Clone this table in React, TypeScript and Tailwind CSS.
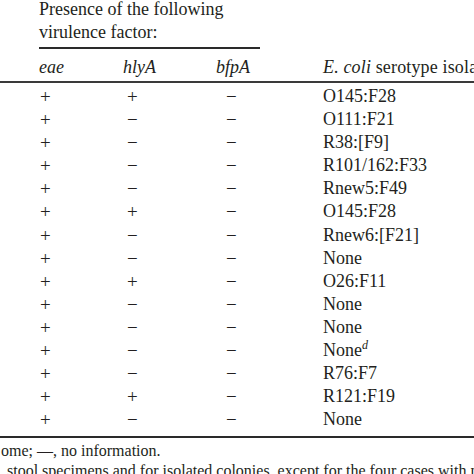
import React from "react";

// Table rows: eae, hlyA, bfpA, serotype
const ROWS: [string, string, string, React.ReactNode][] = [
  ["+", "+", "−", "O145:F28"],
  ["+", "−", "−", "O111:F21"],
  ["+", "−", "−", "R38:[F9]"],
  ["+", "−", "−", "R101/162:F33"],
  ["+", "−", "−", "Rnew5:F49"],
  ["+", "+", "−", "O145:F28"],
  ["+", "−", "−", "Rnew6:[F21]"],
  ["+", "−", "−", "None"],
  ["+", "+", "−", "O26:F11"],
  ["+", "−", "−", "None"],
  ["+", "−", "−", "None"],
  [
    "+",
    "−",
    "−",
    <>
      None<sup className="italic text-[12px] -top-[7px]">d</sup>
    </>,
  ],
  ["+", "−", "−", "R76:F7"],
  ["+", "+", "−", "R121:F19"],
  ["+", "−", "−", "None"],
];

export default function App() {
  return (
    <div
      className="w-[474px] h-[474px] overflow-hidden bg-white text-[#231f20] whitespace-nowrap"
      style={{ fontFamily: '"Liberation Serif", "Times New Roman", serif' }}
    >
      {/* Group header */}
      <div className="pl-[39px] mt-[-2px] text-[18px] leading-[23px]">
        <div>Presence of the following</div>
        <div>virulence factor:</div>
      </div>
      <div className="ml-[39px] mt-[3px] w-[221px] h-[2px] bg-[#2a2a2a]" />

      {/* Column header */}
      <div className="flex pt-[7px] pb-[2px] text-[18px] leading-[23px]">
        <div className="w-[123px] shrink-0 pl-[39px] italic">eae</div>
        <div className="w-[93px] shrink-0 italic">hlyA</div>
        <div className="w-[107px] shrink-0 italic">bfpA</div>
        <div className="shrink-0 tracking-[0.15px]">
          <span className="italic">E. coli</span> serotype isolated
        </div>
      </div>
      <div className="w-full h-[2px] bg-[#3a3a3a]" />

      {/* Body */}
      <div className="pt-[2px] pb-[5px] text-[18px] leading-[23.1px]">
        {ROWS.map((r, i) => (
          <div key={i} className="flex">
            <div className="w-[123px] shrink-0 pl-[40px] text-[19px]">{r[0]}</div>
            <div className="w-[93px] shrink-0 pl-[4px] text-[19px]">{r[1]}</div>
            <div className="w-[107px] shrink-0 pl-[10px] text-[19px]">{r[2]}</div>
            <div className="shrink-0">{r[3]}</div>
          </div>
        ))}
      </div>
      <div className="w-full h-[2px] bg-[#2a2a2a]" />

      {/* Footnotes */}
      <div className="mt-[3px] text-[16px] leading-[20px]">
        <div className="pl-[1px]">ome; —, no information.</div>
        <div className="pl-[7px]">
          stool specimens and for isolated colonies, except for the four cases with no
        </div>
      </div>
    </div>
  );
}
